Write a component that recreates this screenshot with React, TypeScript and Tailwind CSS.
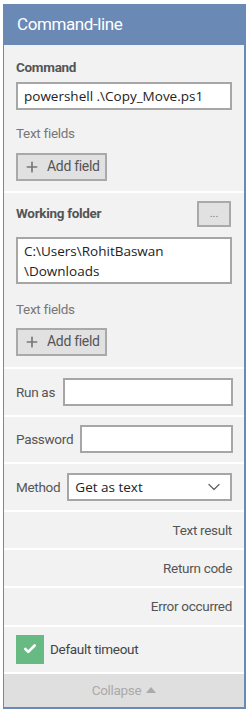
import { ChevronDown, Plus, Check } from "lucide-react";

const inputCls =
  "h-[28px] bg-white border-2 border-[#a6a6a6] px-[6px] text-[13.5px] text-[#222] font-['Open_Sans',sans-serif] outline-none";

const labelCls = "shrink-0 whitespace-nowrap text-[13.5px] tracking-[-0.3px] text-[#555]";

function AddField() {
  return (
    <button className="mt-[9px] flex h-[28px] w-[91px] items-center gap-[7px] border-2 border-[#a9a9a9] bg-[#e1e1e1] pl-[6px] text-[14px] tracking-[-0.3px] text-[#555]">
      <Plus size={16} strokeWidth={2.5} className="text-[#777]" />
      Add field
    </button>
  );
}

function Divider() {
  return <div className="h-[2px] bg-white" />;
}

export default function App() {
  return (
    <div className="min-h-[712px] bg-white pt-[4px] pl-[3px] font-['Roboto',sans-serif]">
      <div className="w-[243px] border-l border-r-2 border-b-2 border-[#6a8ab5] bg-[#f2f2f2]">
        <div className="flex h-[41px] items-center bg-[#6a8ab5] pl-[13px] text-[17px] tracking-[-0.4px] text-white">
          Command-line
        </div>

        <div className="px-[12px] pt-[12px] pb-[10px]">
          <div className="text-[13.5px] font-bold tracking-[-0.3px] text-[#555]">Command</div>
          <input
            className={inputCls + " mt-[5px] w-[216px]"}
            defaultValue="powershell .\Copy_Move.ps1"
          />
          <div className="mt-[13px] text-[13.5px] tracking-[-0.3px] text-[#777]">Text fields</div>
          <AddField />
        </div>
        <Divider />

        <div className="px-[12px] pt-[8px] pb-[11px]">
          <div className="flex items-center justify-between">
            <div className="text-[13.5px] font-bold tracking-[-0.3px] text-[#555]">Working folder</div>
            <button className="mr-[1px] flex h-[26px] w-[34px] items-center justify-center border-2 border-[#a9a9a9] bg-[#e1e1e1] text-[11px] leading-none text-[#777]">
              ...
            </button>
          </div>
          <div className="mt-[10px] h-[47px] w-[216px] border-2 border-[#a6a6a6] bg-white px-[6px] pt-[2px] font-['Open_Sans',sans-serif] text-[13.5px] leading-[20px] text-[#222]">
            C:\Users\RohitBaswan
            <br />
            \Downloads
          </div>
          <div className="mt-[15px] text-[13.5px] tracking-[-0.3px] text-[#777]">Text fields</div>
          <AddField />
        </div>
        <Divider />

        <div className="flex h-[46px] items-center gap-[8px] px-[12px]">
          <span className={labelCls}>Run as</span>
          <input className={inputCls + " w-[170px]"} />
        </div>
        <Divider />
        <div className="flex h-[45px] items-center gap-[7px] px-[12px]">
          <span className={labelCls}>Password</span>
          <input type="password" className={inputCls + " w-[153px]"} />
        </div>
        <Divider />
        <div className="flex h-[46px] items-center gap-[7px] px-[12px]">
          <span className={labelCls}>Method</span>
          <div className={inputCls + " flex w-[166px] items-center justify-between"}>
            <span>Get as text</span>
            <ChevronDown size={20} strokeWidth={1.6} className="text-[#666]" />
          </div>
        </div>
        <Divider />

        <div className="flex h-[36px] items-center justify-end pr-[12px]">
          <span className={labelCls}>Text result</span>
        </div>
        <Divider />
        <div className="flex h-[36px] items-center justify-end pr-[12px]">
          <span className={labelCls}>Return code</span>
        </div>
        <Divider />
        <div className="flex h-[37px] items-center justify-end pr-[12px]">
          <span className={labelCls}>Error occurred</span>
        </div>
        <Divider />

        <div className="flex h-[45px] items-center gap-[6px] px-[12px]">
          <div className="flex h-[29px] w-[28px] items-center justify-center bg-[#67bb82]">
            <Check size={14} strokeWidth={4.5} className="text-white" />
          </div>
          <span className="text-[13.5px] tracking-[-0.3px] text-[#444]">Default timeout</span>
        </div>
        <Divider />

        <div className="flex h-[33px] items-center justify-center gap-[5px] bg-[#dfdfdf] text-[13.5px] tracking-[-0.3px] text-[#aaa]">
          Collapse
          <span className="inline-block h-0 w-0 border-x-[5px] border-b-[6px] border-x-transparent border-b-[#aaa]" />
        </div>
      </div>
    </div>
  );
}
